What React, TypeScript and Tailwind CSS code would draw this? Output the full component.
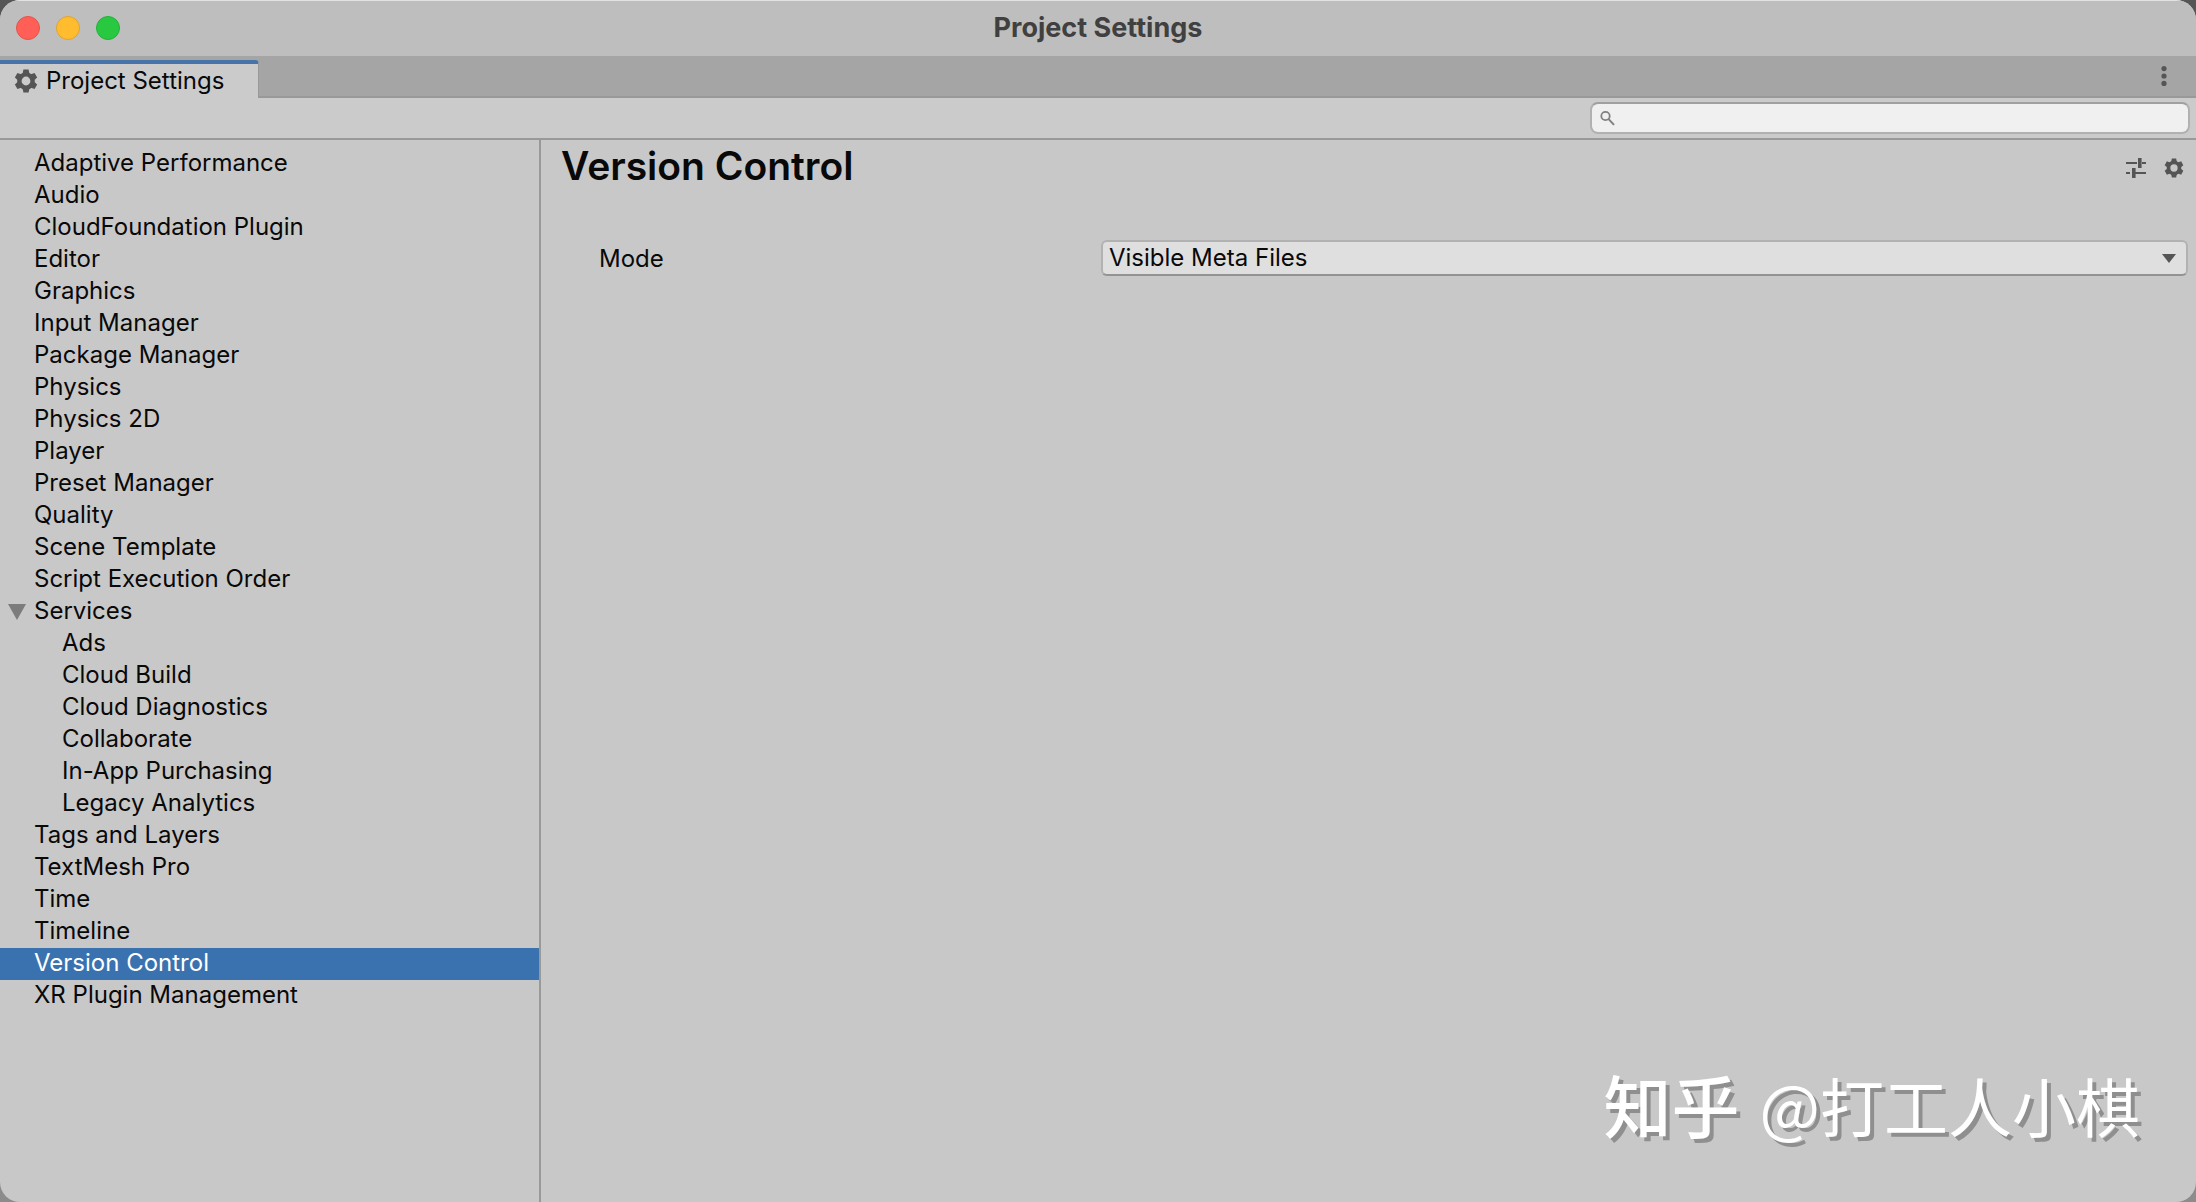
import { useState } from 'react';

interface SettingsItem {
  name: string;
  children?: string[];
}

const ITEMS: SettingsItem[] = [
  { name: 'Adaptive Performance' },
  { name: 'Audio' },
  { name: 'CloudFoundation Plugin' },
  { name: 'Editor' },
  { name: 'Graphics' },
  { name: 'Input Manager' },
  { name: 'Package Manager' },
  { name: 'Physics' },
  { name: 'Physics 2D' },
  { name: 'Player' },
  { name: 'Preset Manager' },
  { name: 'Quality' },
  { name: 'Scene Template' },
  { name: 'Script Execution Order' },
  {
    name: 'Services',
    children: [
      'Ads',
      'Cloud Build',
      'Cloud Diagnostics',
      'Collaborate',
      'In-App Purchasing',
      'Legacy Analytics',
    ],
  },
  { name: 'Tags and Layers' },
  { name: 'TextMesh Pro' },
  { name: 'Time' },
  { name: 'Timeline' },
  { name: 'Version Control' },
  { name: 'XR Plugin Management' },
];

function GearIcon({ className }: { className: string }) {
  return (
    <svg className={className} viewBox="0 0 24 24">
      <circle cx="12" cy="12" r="6.6" fill="none" stroke="#555555" strokeWidth="4.4" />
      {[0, 60, 120, 180, 240, 300].map((angle) => (
        <path key={angle} d="M9.4 0.6h5.2l.9 4.6h-7z" fill="#555555" transform={`rotate(${angle} 12 12)`} />
      ))}
    </svg>
  );
}

function TitleBar() {
  return (
    <header className="grid h-14 grid-cols-[1fr_auto_1fr] items-center border-t border-[#e2e2e2] bg-[#bebebe] px-4 pb-0.5">
      <div className="flex gap-4">
        <button aria-label="Close" className="size-6 rounded-full border border-[#e2544b] bg-[#ff5f57]" />
        <button aria-label="Minimize" className="size-6 rounded-full border border-[#e0a32e] bg-[#febc2e]" />
        <button aria-label="Zoom" className="size-6 rounded-full border border-[#24b03a] bg-[#28c840]" />
      </div>
      <h1 className="text-[27px] leading-8 font-bold text-[#404040]">Project Settings</h1>
    </header>
  );
}

function TabBar() {
  return (
    <div className="flex h-[42px] items-end justify-between bg-[#a5a5a5] shadow-[inset_0_-2px_0_#999999]">
      <button className="flex h-[38px] w-[259px] items-center gap-2 rounded-tr border-t-4 border-r border-t-[#4673aa] border-r-[#999999] bg-[#cbcbcb] pl-[14px]">
        <GearIcon className="size-6" />
        Project Settings
      </button>
      <button aria-label="Tab menu" className="mr-[26px] mb-3">
        <svg className="h-5 w-[12px] fill-[#555555]" viewBox="0 0 12 20">
          <circle cx="6" cy="2.6" r="2.6" />
          <circle cx="6" cy="10" r="2.6" />
          <circle cx="6" cy="17.4" r="2.6" />
        </svg>
      </button>
    </div>
  );
}

function Toolbar() {
  return (
    <div className="flex h-[42px] items-start justify-end border-b-2 border-[#999999] bg-[#cbcbcb] px-[6px] pt-1">
      <label className="flex h-8 w-[600px] items-center rounded-lg border-2 border-[#b1b1b1] border-t-[#a0a0a0] bg-[#f0f0f0] pl-2">
        <svg className="size-4 fill-none stroke-[#808080]" viewBox="0 0 16 16">
          <circle cx="5.5" cy="6" r="4.2" strokeWidth="1.8" />
          <path d="M8.6 9.1 14 14.9" strokeWidth="2" />
        </svg>
        <input type="text" aria-label="Search settings" className="min-w-0 flex-1 bg-transparent px-2 outline-none" />
      </label>
    </div>
  );
}

interface SidebarProps {
  selected: string;
  onSelect: (name: string) => void;
}

function Sidebar({ selected, onSelect }: SidebarProps) {
  const [open, setOpen] = useState(true);

  return (
    <nav className="w-[541px] shrink-0 border-r-2 border-[#999999] pt-2">
      <ul>
        {ITEMS.map((item) => (
          <li key={item.name}>
            <div className={`flex h-8 items-center pb-0.5 ${selected === item.name ? 'bg-[#3a72b0] text-white' : ''}`}>
              <div className="flex w-[34px] shrink-0 pt-0.5 pl-2">
                {item.children && (
                  <button aria-label={`Toggle ${item.name}`} aria-expanded={open} onClick={() => setOpen(!open)}>
                    <svg className="h-4 w-[18px] fill-[#7c7c7c]" viewBox="0 0 18 16">
                      <path d="M0 0h18L9 16z" />
                    </svg>
                  </button>
                )}
              </div>
              <button className="flex-1 text-left" onClick={() => onSelect(item.name)}>
                {item.name}
              </button>
            </div>
            {item.children && open && (
              <ul>
                {item.children.map((child) => (
                  <li key={child} className={`flex h-8 items-center pb-0.5 pl-[62px] ${selected === child ? 'bg-[#3a72b0] text-white' : ''}`}>
                    <button className="flex-1 text-left" onClick={() => onSelect(child)}>
                      {child}
                    </button>
                  </li>
                ))}
              </ul>
            )}
          </li>
        ))}
      </ul>
    </nav>
  );
}

function SettingsPanel({ title }: { title: string }) {
  return (
    <main className="min-w-0 flex-1 pt-1 pr-2 pl-5">
      <div className="flex h-12 items-center justify-between">
        <h2 className="pb-1 text-[39px] leading-[44px] font-semibold">{title}</h2>
        <div className="flex items-center gap-[18px] pr-1">
          <button aria-label="Presets">
            <svg className="size-5 fill-[#555555]" viewBox="0 0 20 20">
              <path d="M0 4h11v2H0zM16 4h4v2h-4zM12 0h3.6v10H12zM0 14h4v2H0zM9 14h11v2H9zM6 10h3.6v10H6z" />
            </svg>
          </button>
          <button aria-label="Settings menu">
            <GearIcon className="size-5" />
          </button>
        </div>
      </div>
      <div className="mt-12 flex h-9 items-center">
        <label htmlFor="mode" className="w-[540px] shrink-0 pt-0.5 pl-[38px]">
          Mode
        </label>
        <div className="grid min-w-0 flex-1 items-center">
          <select
            id="mode"
            className="col-start-1 row-start-1 h-9 appearance-none rounded-md border-2 border-[#b2b2b2] border-b-[#939393] bg-[#dfdfdf] pl-[6px] outline-none"
          >
            <option>Visible Meta Files</option>
            <option>Hidden Meta Files</option>
          </select>
          <svg className="pointer-events-none col-start-1 row-start-1 mr-3 h-[9px] w-[14px] justify-self-end fill-[#555555]" viewBox="0 0 14 9">
            <path d="M0 0h14L7 9z" />
          </svg>
        </div>
      </div>
    </main>
  );
}

export default function App() {
  const [selected, setSelected] = useState('Version Control');

  return (
    <div className="min-h-screen bg-linear-to-b from-[#555555] to-[#8c8c8c]">
      <div className="relative flex min-h-screen flex-col overflow-hidden rounded-[20px] bg-[#c8c8c8] font-['Inter',sans-serif] text-[24px] leading-8 text-[#090909]">
        <TitleBar />
        <TabBar />
        <Toolbar />
        <div className="flex flex-1">
          <Sidebar selected={selected} onSelect={setSelected} />
          <SettingsPanel title={selected} />
        </div>

        {/* Watermark */}
        <div className="pointer-events-none absolute right-[56px] bottom-[52px] flex items-center gap-5 font-['Noto_Sans_CJK_SC',sans-serif] text-[64px] leading-[92px] text-white [text-shadow:4px_4px_0_#8f8f8f]">
          <span className="text-[68px] font-medium">知乎</span>
          <span>@打工人小棋</span>
        </div>
      </div>
    </div>
  );
}
